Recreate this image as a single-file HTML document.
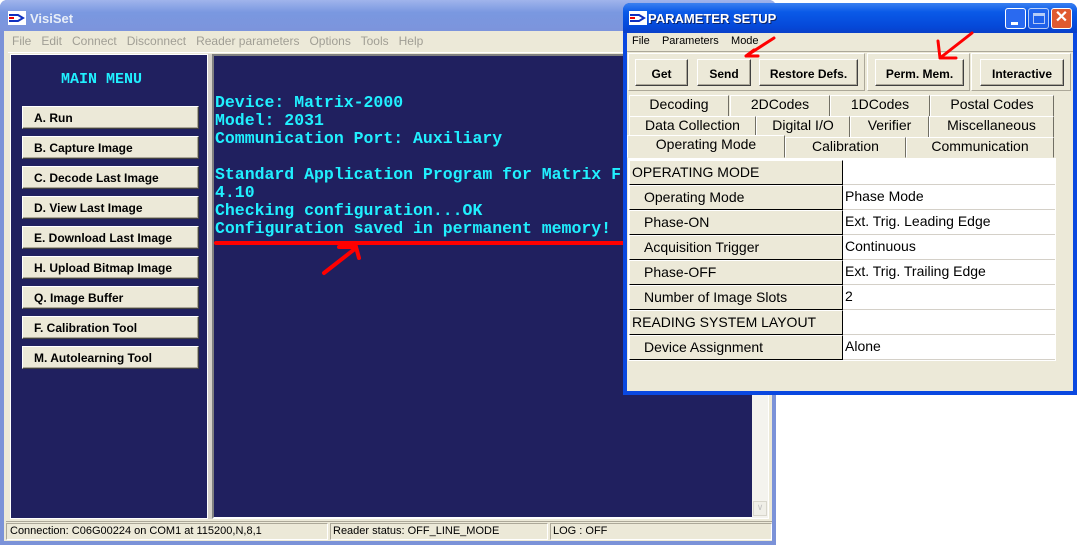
<!DOCTYPE html>
<html><head><style>
*{box-sizing:border-box;margin:0;padding:0}
body{width:1081px;height:547px;background:#fff;position:relative;overflow:hidden;font-family:"Liberation Sans",sans-serif}
.abs{position:absolute}
.btn{position:absolute;background:#ece9d8;border:1px solid;border-color:#fff #404040 #404040 #fff;box-shadow:inset -1px -1px 0 #aca899;font-weight:bold;font-size:12px;color:#000}
.mono{font-family:"Liberation Mono",monospace;font-weight:bold;color:#20f0ff;font-size:16.5px;line-height:18px;white-space:pre}
.tab{position:absolute;background:#ece9d8;border:1px solid;border-color:#fff #716f64 #ece9d8 #fff;font-size:14px;text-align:center;color:#000}
.row{position:absolute;left:0;width:426px;height:25px;font-size:14px}
.row .l{position:absolute;left:0;top:0;width:214px;height:25px;background:#ece9d8;border:1px solid;border-color:#fff #000 #000 #fff;padding:3px 0 0 14px}
.row .v{position:absolute;left:214px;top:0;width:212px;height:25px;background:#fff;border-bottom:1px solid #d4d0c8;padding:3px 0 0 2px}
</style></head><body>
<div class="abs" style="left:0;top:0;width:776px;height:545px;background:#7b92d8;border-radius:7px 7px 0 0"></div>
<div class="abs" style="left:0;top:0;width:776px;height:31px;background:linear-gradient(#a0b4ec,#7a98e0 40%,#7c94dc);border-radius:7px 7px 0 0"></div>
<svg class="abs" style="left:8px;top:11px" width="18" height="14"><rect width="18" height="14" fill="#fff"/><path d="M1 4h9l5 3-5 3H1" fill="none" stroke="#1030c0" stroke-width="2"/><rect x="1" y="6" width="5" height="2" fill="#e00"/></svg>
<div class="abs" style="left:30px;top:11px;color:#e8eef8;font-weight:bold;font-size:13px">VisiSet</div>
<div class="abs" style="left:4px;top:31px;width:768px;height:510px;background:#ece9d8"></div>
<div class="abs" style="left:12px;top:34px;font-size:12px;color:#a09e94">File&nbsp;&nbsp; Edit&nbsp;&nbsp; Connect&nbsp;&nbsp; Disconnect&nbsp;&nbsp; Reader parameters&nbsp;&nbsp; Options&nbsp;&nbsp; Tools&nbsp;&nbsp; Help</div>
<div class="abs" style="left:8px;top:52px;width:765px;height:1px;background:#fff"></div>
<div class="abs" style="left:10px;top:54px;width:198px;height:465px;background:#20205f;border:1px solid #fff"></div>
<div class="abs" style="left:208px;top:54px;width:4px;height:465px;background:#d4d0c8"></div>
<div class="abs" style="left:212px;top:54px;width:557px;height:465px;background:#20205f;border:2px solid;border-color:#808080 #fff #fff #808080"></div>
<div class="abs" style="left:752px;top:56px;width:16px;height:462px;background:#f4f3ee"></div>
<div class="abs" style="left:753px;top:501px;width:14px;height:15px;border:1px solid #d8d6cc;background:#f0efe8;color:#c0c0c0;font-size:9px;text-align:center">&#8744;</div>
<div class="abs mono" style="left:61px;top:71px;font-size:15px">MAIN MENU</div>
<div class="btn" style="left:22px;top:106px;width:177px;height:23px;padding:4px 0 0 11px">A. Run</div>
<div class="btn" style="left:22px;top:136px;width:177px;height:23px;padding:4px 0 0 11px">B. Capture Image</div>
<div class="btn" style="left:22px;top:166px;width:177px;height:23px;padding:4px 0 0 11px">C. Decode Last Image</div>
<div class="btn" style="left:22px;top:196px;width:177px;height:23px;padding:4px 0 0 11px">D. View Last Image</div>
<div class="btn" style="left:22px;top:226px;width:177px;height:23px;padding:4px 0 0 11px">E. Download Last Image</div>
<div class="btn" style="left:22px;top:256px;width:177px;height:23px;padding:4px 0 0 11px">H. Upload Bitmap Image</div>
<div class="btn" style="left:22px;top:286px;width:177px;height:23px;padding:4px 0 0 11px">Q. Image Buffer</div>
<div class="btn" style="left:22px;top:316px;width:177px;height:23px;padding:4px 0 0 11px">F. Calibration Tool</div>
<div class="btn" style="left:22px;top:346px;width:177px;height:23px;padding:4px 0 0 11px">M. Autolearning Tool</div>
<div class="abs mono" style="left:215px;top:94px">Device: Matrix-2000
Model: 2031
Communication Port: Auxiliary

Standard Application Program for Matrix F
4.10
Checking configuration...OK
Configuration saved in permanent memory!</div>
<svg class="abs" style="left:212px;top:236px" width="420" height="40"><path d="M4 7H625" stroke="#f00" stroke-width="4" stroke-linecap="round"/><path d="M112 37L144 12M127 11L144 11L147 22" stroke="#f00" stroke-width="4" fill="none" stroke-linecap="round"/></svg>
<div class="abs" style="left:6px;top:521px;width:766px;height:1px;background:#aca899"></div>
<div class="abs" style="left:6px;top:523px;width:322px;height:17px;border:1px solid;border-color:#aca899 #fff #fff #aca899;font-size:11px;padding:1px 3px">Connection: C06G00224 on COM1 at 115200,N,8,1</div>
<div class="abs" style="left:330px;top:523px;width:218px;height:17px;border:1px solid;border-color:#aca899 #fff #fff #aca899;font-size:11px;padding:1px 2px">Reader status: OFF_LINE_MODE</div>
<div class="abs" style="left:550px;top:523px;width:222px;height:17px;border:1px solid;border-color:#aca899 #fff #fff #aca899;font-size:11px;padding:1px 2px">LOG : OFF</div>
<div class="abs" style="left:623px;top:3px;width:454px;height:392px;background:#0a48e0;border-radius:7px 7px 0 0"></div>
<div class="abs" style="left:623px;top:3px;width:454px;height:30px;background:linear-gradient(#3a80f0,#0a5ae8 30%,#0548d8 80%,#0a40c8);border-radius:7px 7px 0 0"></div>
<svg class="abs" style="left:629px;top:11px" width="18" height="14"><rect width="18" height="14" fill="#fff"/><path d="M1 4h9l5 3-5 3H1" fill="none" stroke="#1030c0" stroke-width="2"/><rect x="1" y="6" width="5" height="2" fill="#e00"/></svg>
<div class="abs" style="left:648px;top:11px;color:#fff;font-weight:bold;font-size:13px;text-shadow:1px 1px #0a246a">PARAMETER SETUP</div>
<div class="abs" style="left:1005px;top:8px;width:21px;height:21px;border:1px solid #fff;border-radius:3px;background:#2a6af0"><div style="position:absolute;left:5px;top:13px;width:7px;height:3px;background:#fff"></div></div>
<div class="abs" style="left:1028px;top:8px;width:21px;height:21px;border:1px solid #fff;border-radius:3px;background:#2a6af0;opacity:.7"><div style="position:absolute;left:4px;top:4px;width:12px;height:11px;border:1px solid #fff;border-top-width:3px"></div></div>
<div class="abs" style="left:1051px;top:8px;width:21px;height:21px;border:1px solid #fff;border-radius:3px;background:#e05a30;color:#fff;font-weight:bold;font-size:16px;text-align:center;line-height:18px">✕</div>
<div class="abs" style="left:627px;top:33px;width:446px;height:358px;background:#ece9d8"></div>
<div class="abs" style="left:632px;top:35px;font-size:11px">File&nbsp;&nbsp;&nbsp; Parameters&nbsp;&nbsp;&nbsp; Mode</div>
<div class="abs" style="left:627px;top:51px;width:446px;height:1px;background:#aca899"></div>
<div class="abs" style="left:628px;top:53px;width:237px;height:38px;border:1px solid;border-color:#fff #aca899 #aca899 #fff"></div>
<div class="abs" style="left:867px;top:53px;width:103px;height:38px;border:1px solid;border-color:#fff #aca899 #aca899 #fff"></div>
<div class="abs" style="left:971px;top:53px;width:100px;height:38px;border:1px solid;border-color:#fff #aca899 #aca899 #fff"></div>
<div class="btn" style="left:635px;top:59px;width:53px;height:27px;padding-top:7px;text-align:center">Get</div>
<div class="btn" style="left:697px;top:59px;width:54px;height:27px;padding-top:7px;text-align:center">Send</div>
<div class="btn" style="left:759px;top:59px;width:99px;height:27px;padding-top:7px;text-align:center">Restore Defs.</div>
<div class="btn" style="left:875px;top:59px;width:89px;height:27px;padding-top:7px;text-align:center">Perm. Mem.</div>
<div class="btn" style="left:980px;top:59px;width:84px;height:27px;padding-top:7px;text-align:center">Interactive</div>
<svg class="abs" style="left:740px;top:28px" width="240" height="36"><path d="M6 28L34 10M6 28L14 22M6 28H18" stroke="#f00" stroke-width="3" fill="none" stroke-linecap="round"/><path d="M200 30L232 5M200 30L198 13M200 30L216 30" stroke="#f00" stroke-width="3" fill="none" stroke-linecap="round"/></svg>
<div class="tab" style="left:629px;top:95px;width:100px;height:22px">Decoding</div>
<div class="tab" style="left:730px;top:95px;width:100px;height:22px">2DCodes</div>
<div class="tab" style="left:830px;top:95px;width:100px;height:22px">1DCodes</div>
<div class="tab" style="left:930px;top:95px;width:124px;height:22px">Postal Codes</div>
<div class="tab" style="left:629px;top:116px;width:127px;height:22px">Data Collection</div>
<div class="tab" style="left:756px;top:116px;width:94px;height:22px">Digital I/O</div>
<div class="tab" style="left:850px;top:116px;width:79px;height:22px">Verifier</div>
<div class="tab" style="left:929px;top:116px;width:125px;height:22px">Miscellaneous</div>
<div class="tab" style="left:627px;top:135px;width:158px;height:23px">Operating Mode</div>
<div class="tab" style="left:785px;top:137px;width:121px;height:21px">Calibration</div>
<div class="tab" style="left:906px;top:137px;width:148px;height:21px">Communication</div>
<div class="abs" style="left:628px;top:158px;width:428px;height:203px;border:1px solid #fff;background:#fff">
<div class="row" style="top:1px"><div class="l" style="padding-left:2px">OPERATING MODE</div><div class="v"></div></div>
<div class="row" style="top:26px"><div class="l">Operating Mode</div><div class="v">Phase Mode</div></div>
<div class="row" style="top:51px"><div class="l">Phase-ON</div><div class="v">Ext. Trig. Leading Edge</div></div>
<div class="row" style="top:76px"><div class="l">Acquisition Trigger</div><div class="v">Continuous</div></div>
<div class="row" style="top:101px"><div class="l">Phase-OFF</div><div class="v">Ext. Trig. Trailing Edge</div></div>
<div class="row" style="top:126px"><div class="l">Number of Image Slots</div><div class="v">2</div></div>
<div class="row" style="top:151px"><div class="l" style="padding-left:2px">READING SYSTEM LAYOUT</div><div class="v"></div></div>
<div class="row" style="top:176px"><div class="l">Device Assignment</div><div class="v">Alone</div></div>
</div>
</body></html>
